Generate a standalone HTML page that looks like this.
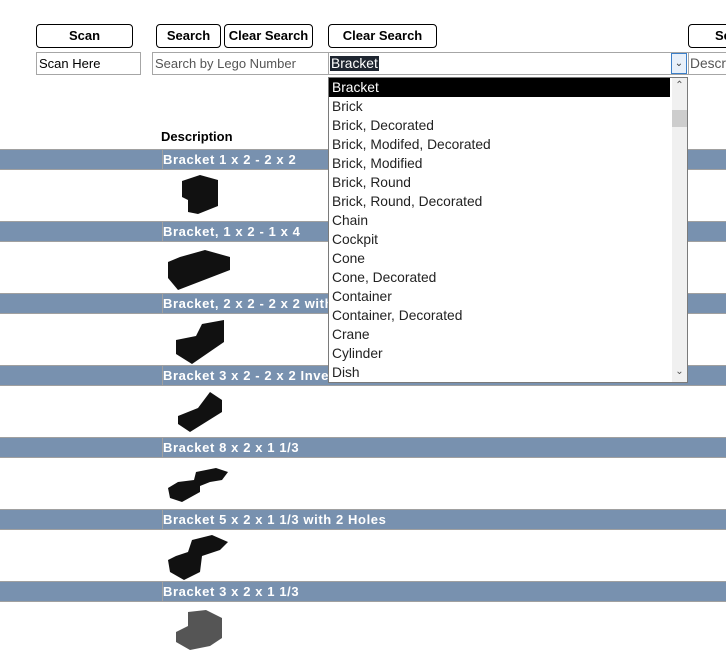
<!DOCTYPE html>
<html><head><style>
body{margin:0;width:726px;height:653px;overflow:hidden;background:#fff;font-family:"Liberation Sans",sans-serif;position:relative}
.a{position:absolute}
.btn{position:absolute;top:24px;height:22px;border:1px solid #000;border-radius:4px;background:#fff;font-weight:bold;font-size:13px;text-align:center;line-height:22px;box-sizing:content-box}
.in{position:absolute;top:52px;height:23px;border:1px solid #a6a6a6;font-size:13px;line-height:21px;padding-left:2px;box-sizing:border-box}
.band{position:absolute;left:0;width:726px;height:19px;background:#7891af;border-top:1px solid #a0a0a0;border-bottom:1px solid #a0a0a0;color:#fff;font-weight:bold;font-size:13px;line-height:19px;letter-spacing:0.6px}
.band span{position:absolute;left:162px;border-left:1px solid #a0a0a0;padding-left:0;height:19px;white-space:nowrap}
.dd{position:absolute;left:328px;top:77px;width:360px;height:306px;border:1px solid #7a7a7a;box-sizing:border-box;background:#fff;font-size:13.8px}
.dd div.i{height:19px;line-height:19px;padding-left:3px;color:#222}
</style></head><body>
<div class="btn" style="left:36px;width:95px">Scan</div>
<div class="btn" style="left:156px;width:63px">Search</div>
<div class="btn" style="left:224px;width:87px">Clear Search</div>
<div class="btn" style="left:328px;width:107px">Clear Search</div>
<div class="btn" style="left:688px;width:60px;text-align:left;padding-left:26px">Se</div>
<div class="in" style="left:36px;width:105px">Scan Here</div>
<div class="in" style="left:152px;width:177px;color:#555">Search by Lego Number</div>
<div class="in" style="left:328px;width:361px;padding-left:1px;font-size:13.8px"><span style="background:#1e2530;color:#fff;padding:0 1px">Bracket</span></div>
<div class="a" style="left:671px;top:53px;width:16px;height:21px;border:1px solid #3c7fc8;box-sizing:border-box;background:#e8f0fa;font-size:10px;text-align:center;line-height:19px;color:#333">&#8964;</div>
<div class="in" style="left:688px;width:40px;color:#555;border-left:none;font-size:13.8px">Descri</div>
<div class="a" style="left:161px;top:129px;font-weight:bold;font-size:13px">Description</div>

<div class="band" style="top:149px"><span>Bracket 1 x 2 - 2 x 2</span></div>
<div class="band" style="top:221px"><span>Bracket, 1 x 2 - 1 x 4</span></div>
<div class="band" style="top:293px"><span>Bracket, 2 x 2 - 2 x 2 with</span></div>
<div class="band" style="top:365px"><span>Bracket 3 x 2 - 2 x 2 Inve</span></div>
<div class="band" style="top:437px"><span>Bracket 8 x 2 x 1 1/3</span></div>
<div class="band" style="top:509px"><span>Bracket 5 x 2 x 1 1/3 with 2 Holes</span></div>
<div class="band" style="top:581px"><span>Bracket 3 x 2 x 1 1/3</span></div>

<svg class="a" style="left:0;top:0" width="726" height="653">
<g fill="#111">
<polygon points="182,181 200,175 218,180 218,206 198,214 188,212 188,200 182,197"/>
<polygon points="168,262 168,278 178,290 230,270 230,257 205,250 180,257"/>
<polygon points="176,340 176,354 192,364 224,342 224,320 202,324 196,336"/>
<polygon points="178,416 178,424 190,432 222,412 222,400 210,392 198,408"/>
<polygon points="168,488 170,498 182,502 200,492 200,486 210,482 222,480 228,472 216,468 196,472 194,480 178,482"/>
<polygon points="168,560 170,572 184,580 200,572 202,556 220,550 228,542 212,535 192,540 188,552 176,556"/>
</g>
<polygon fill="#555" points="176,632 176,642 190,650 210,646 222,638 222,618 206,610 188,612 188,626"/>
</svg>

<div class="dd">
<div class="i" style="background:#000;color:#fff;margin-right:17px">Bracket</div>
<div class="i">Brick</div>
<div class="i">Brick, Decorated</div>
<div class="i">Brick, Modifed, Decorated</div>
<div class="i">Brick, Modified</div>
<div class="i">Brick, Round</div>
<div class="i">Brick, Round, Decorated</div>
<div class="i">Chain</div>
<div class="i">Cockpit</div>
<div class="i">Cone</div>
<div class="i">Cone, Decorated</div>
<div class="i">Container</div>
<div class="i">Container, Decorated</div>
<div class="i">Crane</div>
<div class="i">Cylinder</div>
<div class="i">Dish</div>
<div class="a" style="left:343px;top:0;width:15px;height:304px;background:#f0f0f0"></div>
<div class="a" style="left:343px;top:32px;width:15px;height:17px;background:#cdcdcd"></div>
<div class="a" style="left:343px;top:2px;width:15px;font-size:10px;text-align:center;color:#555">&#8963;</div>
<div class="a" style="left:343px;top:288px;width:15px;font-size:10px;text-align:center;color:#555">&#8964;</div>
</div>
</body></html>
